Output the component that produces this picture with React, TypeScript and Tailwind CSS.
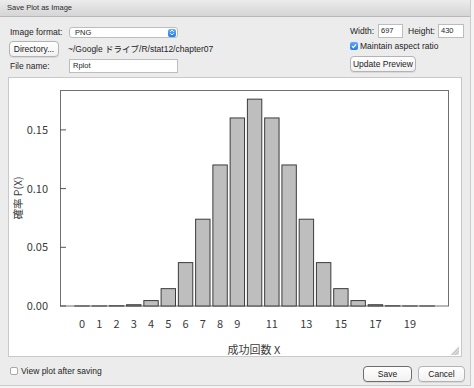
import React from 'react'

const font = { fontFamily: '"Liberation Sans", "Noto Sans CJK JP", sans-serif' }

const choose = (n: number, k: number) => {
  let r = 1
  for (let i = 1; i <= k; i++) r = (r * (n - k + i)) / i
  return r
}

const probs = Array.from({ length: 21 }, (_, k) => choose(20, k) / 2 ** 20)

// plot geometry, in page pixels
const x0 = 82
const step = 17.26
const barW = 14.4
const yBase = 306
const yScale = 1174

const yTicks = [0, 0.05, 0.1, 0.15]
const xLabels = [0, 1, 2, 3, 4, 5, 6, 7, 8, 9, 11, 13, 15, 17, 19]

const PlotChart: React.FC = () => {
  const plotFont = '"Noto Sans CJK JP", "Liberation Sans", sans-serif'
  return (
    <svg width={452} height={278} viewBox="9 78 452 278" className="block">
      <rect x={60.5} y={90.5} width={388} height={215.5} fill="none" stroke="#707070" strokeWidth={1} />
      {probs.map((p, i) => {
        const h = p * yScale
        return (
          <rect
            key={i}
            x={x0 + i * step - barW / 2}
            y={yBase - h}
            width={barW}
            height={Math.max(h, 0.01)}
            fill="#bebebe"
            stroke="#3c3c3c"
            strokeWidth={1}
          />
        )
      })}
      {yTicks.map((t) => {
        const y = yBase - t * yScale
        return (
          <g key={t}>
            <line x1={60} x2={66} y1={y} y2={y} stroke="#555" strokeWidth={1} />
            <text x={48} y={y + 4} textAnchor="end" fontSize={11} fill="#3a3a3a" fontFamily={plotFont}>
              {t.toFixed(2)}
            </text>
          </g>
        )
      })}
      {xLabels.map((n) => (
        <text
          key={n}
          x={x0 + n * step}
          y={328}
          textAnchor="middle"
          fontSize={11}
          fill="#3a3a3a"
          fontFamily={plotFont}
        >
          {n}
        </text>
      ))}
      <text x={254} y={354} textAnchor="middle" fontSize={11} fill="#3a3a3a" fontFamily={plotFont}>
        成功回数 X
      </text>
      <text
        x={0}
        y={0}
        transform="translate(22 198) rotate(-90)"
        textAnchor="middle"
        fontSize={10.5}
        fill="#3a3a3a"
        fontFamily={plotFont}
      >
        確率 P(X)
      </text>
      {/* resize grip */}
      <path d="M459 346 L459 355 L450 355 Z" fill="#dcdcdc" />
      <path d="M452 355 L459 348 M455 355 L459 351" stroke="#bdbdbd" strokeWidth={1} />
    </svg>
  )
}

const MacButton: React.FC<{ label: string; className?: string; primary?: boolean }> = ({ label, className, primary }) => (
  <div
    className={`flex items-center justify-center rounded-[4px] bg-gradient-to-b from-white to-[#f1f1f1] text-[8.5px] text-[#222] shadow-[0_1px_0_rgba(0,0,0,0.08)] ${
      primary ? 'border border-[#6d6d6d]' : 'border border-[#b3b3b3]'
    } ${className ?? ''}`}
  >
    {label}
  </div>
)

const CheckBox: React.FC<{ checked?: boolean }> = ({ checked }) =>
  checked ? (
    <div className="w-[8px] h-[8px] rounded-[2px] bg-gradient-to-b from-[#5fa9f8] to-[#1f78ea] flex items-center justify-center">
      <svg width="6" height="6" viewBox="0 0 6 6">
        <path d="M1 3.2 L2.4 4.6 L5 1.4" stroke="white" strokeWidth={1.2} fill="none" />
      </svg>
    </div>
  ) : (
    <div className="w-[8px] h-[8px] rounded-[2px] bg-white border border-[#a8a8a8]" />
  )

export default function App() {
  return (
    <div className="w-[474px] h-[388px] bg-[#f4f4f4] overflow-hidden" style={font}>
      <div className="w-[471px] h-[386px] bg-[#ececec] border-r border-b border-[#cbcbcb] flex flex-col">
        {/* title bar */}
        <div className="h-[17px] shrink-0 bg-gradient-to-b from-[#ececec] to-[#d5d5d5] border-b border-[#b8b8b8] pl-[7px] flex items-center text-[7.5px] text-[#2b2b2b]">
          Save Plot as Image
        </div>

        {/* options */}
        <div className="h-[60px] shrink-0 flex justify-between text-[8.5px] text-[#1e1e1e]">
          <div className="pl-[9px] pt-[10px] flex flex-col">
            <div className="flex items-center h-[11px]">
              <span className="ml-[1px] w-[59px]">Image format:</span>
              <div className="w-[109px] h-[11px] bg-white border border-[#bdbdbd] rounded-[3px] flex items-center pl-[5px] pr-[1px] text-[7.5px]">
                <span>PNG</span>
                <div className="ml-auto w-[8px] h-[8px] rounded-[2px] bg-gradient-to-b from-[#69b0fa] to-[#1b79ee] flex items-center justify-center">
                  <svg width="6" height="7" viewBox="0 0 6 7">
                    <path d="M1.2 2.8 L3 1 L4.8 2.8 M1.2 4.2 L3 6 L4.8 4.2" stroke="white" strokeWidth={0.9} fill="none" />
                  </svg>
                </div>
              </div>
            </div>
            <div className="mt-[3px] flex items-center h-[16px]">
              <MacButton label="Directory..." className="w-[50px] h-[16px]" />
              <span className="ml-[9px]">~/Google ドライブ/R/stat12/chapter07</span>
            </div>
            <div className="mt-[2px] flex items-center h-[14px]">
              <span className="ml-[1px] w-[59px]">File name:</span>
              <div className="w-[109px] h-[14px] bg-white border border-[#bdbdbd] flex items-center pl-[3px] text-[7.5px]">
                Rplot
              </div>
            </div>
          </div>

          <div className="w-[120px] pr-[6px] pt-[7px] flex flex-col">
            <div className="flex items-center h-[14px]">
              <span className="w-[28px]">Width:</span>
              <div className="w-[25px] h-[14px] bg-white border border-[#bdbdbd] flex items-center pl-[2px] text-[7.5px]">697</div>
              <span className="ml-[5px] w-[30px]">Height:</span>
              <div className="w-[26px] h-[14px] bg-white border border-[#bdbdbd] flex items-center pl-[2px] text-[7.5px]">430</div>
            </div>
            <div className="mt-[4px] flex items-center h-[8px]">
              <CheckBox checked />
              <span className="ml-[2px]">Maintain aspect ratio</span>
            </div>
            <div className="mt-[6px] flex">
              <MacButton label="Update Preview" className="w-[66px] h-[16px]" />
            </div>
          </div>
        </div>

        {/* preview panel */}
        <div className="mx-[8px] h-[280px] shrink-0 bg-white border border-[#c9c9c9]">
          <PlotChart />
        </div>

        {/* footer */}
        <div className="flex-1 flex items-start justify-between text-[8.5px] text-[#1e1e1e]">
          <div className="ml-[10px] mt-[10px] flex items-center h-[8px]">
            <CheckBox />
            <span className="ml-[3px]">View plot after saving</span>
          </div>
          <div className="mr-[5px] mt-[9px] flex gap-[6px]">
            <MacButton label="Save" primary className="w-[49px] h-[16px]" />
            <MacButton label="Cancel" className="w-[47px] h-[16px]" />
          </div>
        </div>
      </div>
    </div>
  )
}
